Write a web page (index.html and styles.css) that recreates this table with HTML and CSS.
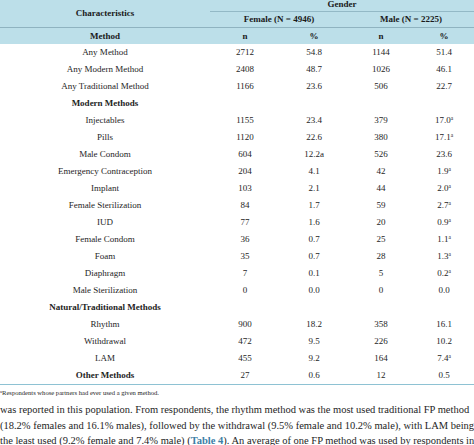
FILE: index.html
```html
<!DOCTYPE html>
<html>
<head>
<meta charset="utf-8">
<link rel="stylesheet" href="styles.css">
</head>
<body>
<div class="page">
<table class="tbl">
<colgroup><col class="c1"><col class="c2"><col class="c3"><col class="c4"><col class="c5"></colgroup>
<thead>
<tr class="h1"><th rowspan="2" class="char">Characteristics</th><th colspan="4" class="gender">Gender</th></tr>
<tr class="h2"><th colspan="2">Female (N = 4946)</th><th colspan="2">Male (N = 2225)</th></tr>
<tr class="h3"><th>Method</th><th>n</th><th>%</th><th>n</th><th>%</th></tr>
</thead>
<tbody>
<tr><td>Any Method</td><td>2712</td><td>54.8</td><td>1144</td><td>51.4</td></tr>
<tr><td>Any Modern Method</td><td>2408</td><td>48.7</td><td>1026</td><td>46.1</td></tr>
<tr><td>Any Traditional Method</td><td>1166</td><td>23.6</td><td>506</td><td>22.7</td></tr>
<tr class="grp"><td>Modern Methods</td><td></td><td></td><td></td><td></td></tr>
<tr><td>Injectables</td><td>1155</td><td>23.4</td><td>379</td><td>17.0<sup>a</sup></td></tr>
<tr><td>Pills</td><td>1120</td><td>22.6</td><td>380</td><td>17.1<sup>a</sup></td></tr>
<tr><td>Male Condom</td><td>604</td><td>12.2a</td><td>526</td><td>23.6</td></tr>
<tr><td>Emergency Contraception</td><td>204</td><td>4.1</td><td>42</td><td>1.9<sup>a</sup></td></tr>
<tr><td>Implant</td><td>103</td><td>2.1</td><td>44</td><td>2.0<sup>a</sup></td></tr>
<tr><td>Female Sterilization</td><td>84</td><td>1.7</td><td>59</td><td>2.7<sup>a</sup></td></tr>
<tr><td>IUD</td><td>77</td><td>1.6</td><td>20</td><td>0.9<sup>a</sup></td></tr>
<tr><td>Female Condom</td><td>36</td><td>0.7</td><td>25</td><td>1.1<sup>a</sup></td></tr>
<tr><td>Foam</td><td>35</td><td>0.7</td><td>28</td><td>1.3<sup>a</sup></td></tr>
<tr><td>Diaphragm</td><td>7</td><td>0.1</td><td>5</td><td>0.2<sup>a</sup></td></tr>
<tr><td>Male Sterilization</td><td>0</td><td>0.0</td><td>0</td><td>0.0</td></tr>
<tr class="grp"><td>Natural/Traditional Methods</td><td></td><td></td><td></td><td></td></tr>
<tr><td>Rhythm</td><td>900</td><td>18.2</td><td>358</td><td>16.1</td></tr>
<tr><td>Withdrawal</td><td>472</td><td>9.5</td><td>226</td><td>10.2</td></tr>
<tr><td>LAM</td><td>455</td><td>9.2</td><td>164</td><td>7.4<sup>a</sup></td></tr>
<tr class="grp last"><td>Other Methods</td><td>27</td><td>0.6</td><td>12</td><td>0.5</td></tr>
</tbody>
</table>
<p class="note"><sup>a</sup>Respondents whose partners had ever used a given method.</p>
<p class="text"><span class="line">was reported in this population. From respondents, the rhythm method was the most used traditional FP method</span><span class="line">(18.2% females and 16.1% males), followed by the withdrawal (9.5% female and 10.2% male), with LAM being</span><span class="line">the least used (9.2% female and 7.4% male) (<a class="ref">Table 4</a>). An average of one FP method was used by respondents in</span></p>
</div>
</body>
</html>
```

FILE: styles.css
```css
html, body {
  margin: 0;
  padding: 0;
  background: #ffffff;
}
.page {
  width: 474px;
  height: 445px;
  overflow: hidden;
  font-family: "Liberation Serif", "Times New Roman", serif;
  color: #1e1e1e;
}
.tbl {
  width: 474px;
  border-collapse: collapse;
  table-layout: fixed;
  font-size: 9px;
}
.c1 { width: 210px; }
.c2 { width: 70px; }
.c3 { width: 68px; }
.c4 { width: 66px; }
.c5 { width: 60px; }
.tbl th {
  background: #bcdfe9;
  font-weight: bold;
  color: #1a1a1a;
  padding: 0;
  text-align: center;
  line-height: 11px;
}
.h1 th.gender {
  height: 11px;
  border-bottom: 1px solid #93b9c6;
  vertical-align: top;
  line-height: 9px;
}
.h1 th.char {
  border-bottom: 1px solid #8fb3c0;
}
.h2 th {
  height: 15px;
  border-bottom: 1px solid #8fb3c0;
}
.h3 th {
  height: 16px;
}
.tbl td {
  padding: 0;
  height: 17px;
  text-align: center;
  line-height: 11px;
  white-space: nowrap;
}
.tbl tr.grp td:first-child {
  font-weight: bold;
}
.tbl tr.last td {
  border-bottom: 1.5px solid #8ec2d3;
}
.tbl sup {
  font-size: 5.5px;
  vertical-align: 3px;
  line-height: 0;
}
.note {
  margin: 4px 0 0 0;
  font-size: 6.6px;
  line-height: 8px;
  white-space: nowrap;
}
.note sup {
  font-size: 4.5px;
  vertical-align: 2px;
  line-height: 0;
}
.text {
  margin: 5px 0 0 0;
  font-size: 10.5px;
  line-height: 15.5px;
}
.line {
  display: block;
  white-space: nowrap;
  overflow: hidden;
}
.ref {
  color: #3b7ea6;
  font-weight: bold;
}
```
